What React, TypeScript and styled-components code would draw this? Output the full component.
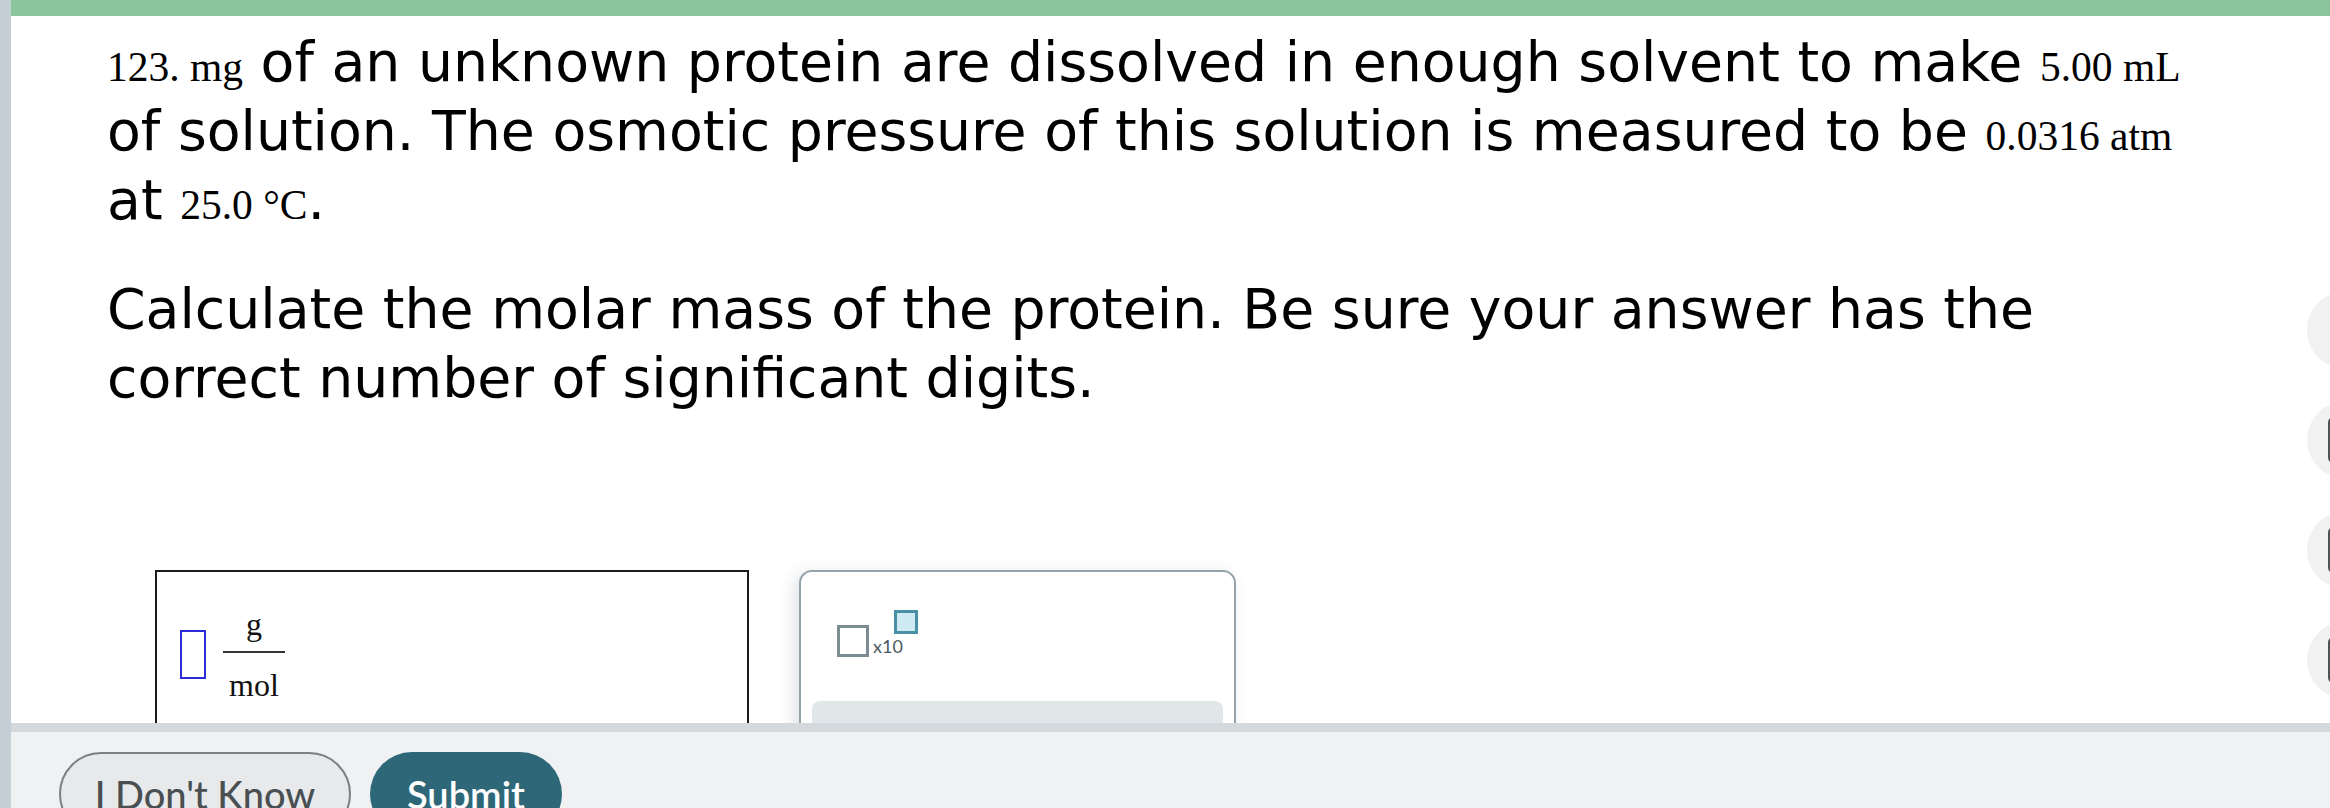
import React from "react";
import styled, { createGlobalStyle } from "styled-components";

const Global = createGlobalStyle`
  html, body { margin: 0; padding: 0; }
  body { width: 2330px; height: 808px; overflow: hidden; background: #ffffff; }
  #root { height: 808px; }
`;

const Shell = styled.div`
  position: relative;
  display: flex;
  height: 808px;
  overflow: hidden;
`;

const Rail = styled.div`
  flex: none;
  width: 11px;
  background: #c5d0d6;
`;

const Main = styled.div`
  flex: 1;
  min-width: 0;
  display: flex;
  flex-direction: column;
`;

const TopStripe = styled.div`
  flex: none;
  height: 16px;
  background: #8bc59e;
`;

const Stage = styled.div`
  flex: none;
  height: 707px;
  box-sizing: border-box;
  overflow: hidden;
  padding: 12px 0 0 96px;
  background: #ffffff;
`;

const Prompt = styled.div`
  width: 2110px;
  font-family: "DejaVu Sans", Verdana, sans-serif;
  font-size: 55.3px;
  line-height: 69px;
  color: #000000;
`;

const Para = styled.p`
  margin: 0 0 40px;
`;

const MathRun = styled.span`
  font-family: "Liberation Serif", "Times New Roman", serif;
  font-size: 41.5px;
  line-height: 1;
`;

const AnswerRow = styled.div`
  display: flex;
  align-items: flex-start;
  gap: 50px;
  margin: 157px 0 0 48px;
`;

const AnswerBox = styled.div`
  flex: none;
  width: 594px;
  height: 220px;
  box-sizing: border-box;
  border: 2px solid #1c1c1c;
  padding: 36px 0 0 23px;
`;

const EntryLine = styled.div`
  display: flex;
  align-items: center;
  gap: 17px;
`;

const Slot = styled.div`
  width: 26px;
  height: 49px;
  box-sizing: border-box;
  border: 2px solid #2b2bd9;
`;

const Fraction = styled.div`
  display: inline-flex;
  flex-direction: column;
  align-items: center;
  font-family: "Liberation Serif", "Times New Roman", serif;
  font-size: 32px;
  line-height: 32px;
  color: #111111;
`;

const FracTerm = styled.span<{ $gap: number }>`
  padding: 0 6px;
  margin-top: ${(p) => p.$gap}px;
`;

const FracBar = styled.div`
  align-self: stretch;
  height: 2px;
  margin-top: 11px;
  background: #333333;
`;

const ToolPanel = styled.div`
  flex: none;
  width: 437px;
  height: 220px;
  box-sizing: border-box;
  display: flex;
  flex-direction: column;
  align-items: flex-start;
  padding: 38px 11px 0;
  border: 2px solid #95a3aa;
  border-radius: 13px;
  background: #ffffff;
  box-shadow: -5px 3px 16px rgba(40, 60, 70, 0.14);
`;

const SciNotation = styled.div`
  display: inline-flex;
  align-items: flex-start;
  margin-left: 25px;
  height: 47px;
`;

const BaseBox = styled.div`
  width: 32px;
  height: 32px;
  box-sizing: border-box;
  margin-top: 15px;
  border: 3px solid #7b8c93;
`;

const TimesTen = styled.span`
  margin: 27px 0 0 4px;
  font-family: Lato, "Open Sans", sans-serif;
  font-size: 18px;
  line-height: 18px;
  color: #4b5a60;
`;

const PowerBox = styled.div`
  width: 24px;
  height: 24px;
  box-sizing: border-box;
  margin-left: -9px;
  border: 3px solid #4a8fa6;
  background: #cdeaf2;
`;

const KeyTray = styled.div`
  align-self: stretch;
  height: 80px;
  margin-top: 44px;
  border-radius: 8px;
  background: #e1e6e9;
`;

const Divider = styled.div`
  flex: none;
  height: 9px;
  background: #d3d9dd;
`;

const Footer = styled.div`
  flex: 1;
  display: flex;
  align-items: flex-start;
  gap: 19px;
  padding: 20px 0 0 48px;
  background: #eff1f3;
`;

const PillButton = styled.button<{ $primary?: boolean; $width: number }>`
  flex: none;
  width: ${(p) => p.$width}px;
  height: 84px;
  box-sizing: border-box;
  border-radius: 42px;
  border: ${(p) => (p.$primary ? "none" : "2px solid #7d7f80")};
  background: ${(p) => (p.$primary ? "#2e6878" : "#e7e9eb")};
  color: ${(p) => (p.$primary ? "#ffffff" : "#4a4f52")};
  font-family: Lato, "Open Sans", sans-serif;
  font-size: 38px;
  font-weight: ${(p) => (p.$primary ? 600 : 500)};
  padding: 0;
  cursor: pointer;
`;

const FabStack = styled.div`
  position: absolute;
  top: 291px;
  right: -55px;
  display: flex;
  flex-direction: column;
  gap: 32px;
`;

const Fab = styled.div`
  position: relative;
  width: 78px;
  height: 78px;
  border-radius: 50%;
  background: #f1f1f1;
  overflow: hidden;
`;

const FabGlyph = styled.svg`
  position: absolute;
  left: 21px;
  top: 16px;
`;

const Qty = ({ value, unit }: { value: string; unit: string }) => (
  <MathRun>
    {value} {unit}
  </MathRun>
);

const ToolGlyph = () => (
  <FabGlyph width="36" height="46" viewBox="0 0 36 46">
    <rect x="1.5" y="1.5" width="33" height="43" rx="4" fill="none" stroke="#4d5256" strokeWidth="3" />
  </FabGlyph>
);

export default function App() {
  return (
    <>
      <Global />
      <Shell>
        <Rail />
        <Main>
          <TopStripe />
          <Stage>
            <Prompt>
              <Para>
                <Qty value="123." unit="mg" /> of an unknown protein are dissolved in enough solvent to make{" "}
                <Qty value="5.00" unit="mL" /> of solution. The osmotic pressure of this solution is measured to be{" "}
                <Qty value="0.0316" unit="atm" /> at <Qty value="25.0" unit="°C" />.
              </Para>
              <Para>
                Calculate the molar mass of the protein. Be sure your answer has the correct number of significant
                digits.
              </Para>
            </Prompt>
            <AnswerRow>
              <AnswerBox>
                <EntryLine>
                  <Slot />
                  <Fraction>
                    <FracTerm $gap={0}>g</FracTerm>
                    <FracBar />
                    <FracTerm $gap={16}>mol</FracTerm>
                  </Fraction>
                </EntryLine>
              </AnswerBox>
              <ToolPanel>
                <SciNotation>
                  <BaseBox />
                  <TimesTen>x10</TimesTen>
                  <PowerBox />
                </SciNotation>
                <KeyTray />
              </ToolPanel>
            </AnswerRow>
          </Stage>
          <Divider />
          <Footer>
            <PillButton $width={292}>I Don't Know</PillButton>
            <PillButton $primary $width={192}>
              Submit
            </PillButton>
          </Footer>
        </Main>
        <FabStack>
          <Fab />
          <Fab>
            <ToolGlyph />
          </Fab>
          <Fab>
            <ToolGlyph />
          </Fab>
          <Fab>
            <ToolGlyph />
          </Fab>
        </FabStack>
      </Shell>
    </>
  );
}
